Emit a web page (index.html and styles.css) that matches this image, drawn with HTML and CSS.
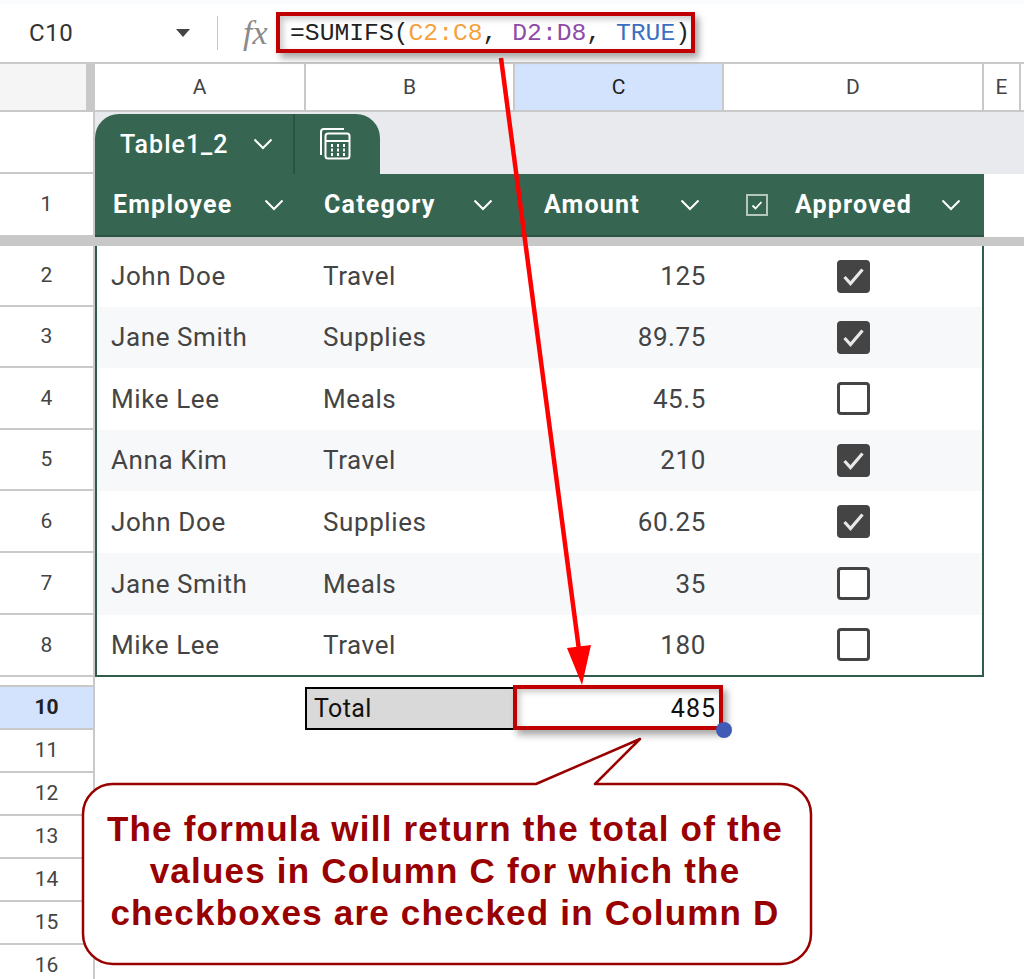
FILE: index.html
```html
<!DOCTYPE html>
<html lang="en">
<head>
<meta charset="utf-8">
<title>SUMIFS with checkboxes</title>
<link rel="stylesheet" href="styles.css">
</head>
<body>
<svg class="defs" width="0" height="0" aria-hidden="true">
  <symbol id="chev" viewBox="0 0 20 12"><polyline points="1.5,1.5 10,10 18.5,1.5" fill="none" stroke="#fff" stroke-width="2"/></symbol>
  <symbol id="tick" viewBox="0 0 33 33"><polyline points="7.5,17 13.5,23.5 25.5,9.5" fill="none" stroke="#e8e8e8" stroke-width="3.2"/></symbol>
</svg>
<div class="page">
  <header class="formula-bar">
    <div class="name-box">C10</div>
    <svg class="caret" width="14" height="8" viewBox="0 0 14 8"><polygon points="0,0 14,0 7,8" fill="#444"/></svg>
    <div class="bar-sep"></div>
    <div class="fx">fx</div>
    <div class="formula"><span class="f-base">=SUMIFS(</span><span class="f-orange">C2:C8</span><span class="f-base">, </span><span class="f-purple">D2:D8</span><span class="f-base">, </span><span class="f-blue">TRUE</span><span class="f-base">)</span></div>
  </header>
  <main class="sheet">
    <div class="corner"></div><div class="col">A</div><div class="col">B</div><div class="col col-on">C</div><div class="col">D</div><div class="col">E</div><div class="col-end"></div>

    <div class="rh rh-blank"></div>
    <div class="tab-row">
      <div class="tab">
        <div class="tab-name">Table1_2<svg class="chev" viewBox="0 0 20 12"><use href="#chev"/></svg></div>
        <div class="tab-calc">
          <svg width="36" height="36" viewBox="0 0 36 36" fill="none" stroke="#fff" stroke-width="2"><path d="M4 29V6a3 3 0 0 1 3-3h20"/><rect x="8.500" y="7.500" width="24" height="25" rx="2.500"/><path d="M9 15h23"/><path d="M14 19.500h2M20 19.500h2M26 19.500h2M14 24h2M20 24h2M26 24h2M14 28.500h2M20 28.500h2M26 28.500h2" stroke-width="3"/></svg>
        </div>
      </div>
    </div>

    <div class="rh">1</div>
    <div class="th"><span>Employee</span><svg class="chev" viewBox="0 0 20 12"><use href="#chev"/></svg></div>
    <div class="th"><span>Category</span><svg class="chev" viewBox="0 0 20 12"><use href="#chev"/></svg></div>
    <div class="th th-amount"><span>Amount</span><svg class="chev" viewBox="0 0 20 12"><use href="#chev"/></svg></div>
    <div class="th th-check">
      <svg class="type-ico" width="24" height="24" viewBox="0 0 24 24" fill="none"><rect x="2" y="2" width="20" height="20" stroke="#b4c6bd" stroke-width="2"/><polyline points="7.500,12.500 10.500,15.500 16.500,9" stroke="#fff" stroke-width="1.800"/></svg>
      <span>Approved</span><svg class="chev" viewBox="0 0 20 12"><use href="#chev"/></svg>
    </div>
    <div class="th-rest"></div>

    <div class="freeze"></div>

    <div class="rh">2</div><div class="td first">John Doe</div><div class="td">Travel</div><div class="td num">125</div><div class="td box last"><div class="cb on"><svg viewBox="0 0 33 33"><use href="#tick"/></svg></div></div><div class="rest"></div>
    <div class="rh">3</div><div class="td first alt">Jane Smith</div><div class="td alt">Supplies</div><div class="td num alt">89.75</div><div class="td box last alt"><div class="cb on"><svg viewBox="0 0 33 33"><use href="#tick"/></svg></div></div><div class="rest"></div>
    <div class="rh">4</div><div class="td first">Mike Lee</div><div class="td">Meals</div><div class="td num">45.5</div><div class="td box last"><div class="cb"></div></div><div class="rest"></div>
    <div class="rh">5</div><div class="td first alt">Anna Kim</div><div class="td alt">Travel</div><div class="td num alt">210</div><div class="td box last alt"><div class="cb on"><svg viewBox="0 0 33 33"><use href="#tick"/></svg></div></div><div class="rest"></div>
    <div class="rh">6</div><div class="td first">John Doe</div><div class="td">Supplies</div><div class="td num">60.25</div><div class="td box last"><div class="cb on"><svg viewBox="0 0 33 33"><use href="#tick"/></svg></div></div><div class="rest"></div>
    <div class="rh">7</div><div class="td first alt">Jane Smith</div><div class="td alt">Meals</div><div class="td num alt">35</div><div class="td box last alt"><div class="cb"></div></div><div class="rest"></div>
    <div class="rh">8</div><div class="td first bottom">Mike Lee</div><div class="td bottom">Travel</div><div class="td num bottom">180</div><div class="td box last bottom"><div class="cb"></div></div><div class="rest"></div>

    <div class="rh rh-blank"></div><div class="empty-row"></div>

    <div class="rh rh-on">10</div><div class="blank"></div><div class="total-label">Total</div><div class="total-value">485</div><div class="blank-wide"></div>
    <div class="rh">11</div><div class="empty-row"></div>
    <div class="rh">12</div><div class="empty-row"></div>
    <div class="rh">13</div><div class="empty-row"></div>
    <div class="rh">14</div><div class="empty-row"></div>
    <div class="rh">15</div><div class="empty-row"></div>
    <div class="rh">16</div><div class="empty-row"></div>
  </main>

  <svg class="annot" width="1024" height="979" viewBox="0 0 1024 979" aria-hidden="true">
    <path class="callout-shape" d="M113 784H536L640 739L595 784H781A30 30 0 0 1 811 814V934A30 30 0 0 1 781 964H113A30 30 0 0 1 83 934V814A30 30 0 0 1 113 784Z"/>
    <line class="arrow-line" x1="501" y1="58" x2="579" y2="650"/>
    <polygon class="arrow-head" points="567,648 591,645 582,685"/>
  </svg>
  <div class="red-box formula-box"></div>
  <div class="red-box total-box"></div>
  <div class="fill-handle"></div>
  <div class="callout-text">The formula will return the total of the<br>values in Column C for which the<br>checkboxes are checked in Column D</div>
</div>
</body>
</html>
```
FILE: styles.css
```css
* { box-sizing: border-box; }
html, body { margin: 0; padding: 0; background: #fff; }
body { font-family: Roboto, "Liberation Sans", sans-serif; color: #444; overflow: hidden; }
.defs { position: absolute; }
.page { position: relative; width: 1024px; height: 979px; overflow: hidden; padding-top: 4px; background: #f9fbfd; }

.formula-bar { height: 60px; display: flex; align-items: center; background: #fff; border-bottom: 2px solid #c9c9c9; }
.name-box { width: 176px; padding-left: 29px; font-size: 24px; letter-spacing: .6px; color: #333; }
.caret { margin-right: 27px; }
.bar-sep { width: 1px; height: 34px; background: #c7c7c7; margin-right: 25px; }
.fx { width: 29px; font-family: "Liberation Serif", serif; font-style: italic; font-size: 34px; color: #8a8a8a; line-height: 1; margin-right: 18px; }
.formula { font-family: "Liberation Mono", monospace; font-size: 24.7px; white-space: nowrap; }
.f-base { color: #222; }
.f-orange { color: #f5a13c; }
.f-purple { color: #8e4ba8; }
.f-blue { color: #3b6fc4; }

.sheet { display: grid; background: #fff; grid-template-columns: 95px 211px 209px 209px 260px 37px 3px;
  grid-template-rows: 48px 62px 63px 9px 61px 61px 62px 61px 62px 62px 62px 10px 43px 43px 43px 43px 43px 43px 43px; }

.corner { background: #f5f5f5; border-right: 9px solid #c8c8c8; border-bottom: 2px solid #c8c8c8; }
.col { display: flex; align-items: center; justify-content: center; font-size: 21px; border-right: 2px solid #c9c9c9; border-bottom: 2px solid #c9c9c9; }
.col-on { background: #d3e3fd; color: #222; }
.col-end { border-bottom: 2px solid #c9c9c9; }

.rh { display: flex; align-items: center; justify-content: center; font-size: 21px; border-right: 2px solid #c9c9c9; border-bottom: 2px solid #c9c9c9; padding-bottom: 1px; }
.rh-on { background: #d3e3fd; font-weight: 700; color: #222; }

.tab-row { grid-column: 2 / -1; background: #e8eaed; display: flex; align-items: flex-end; }
.tab { display: flex; height: 60px; background: #366552; border-radius: 24px 24px 0 0; color: #fff; }
.tab-name { width: 200px; display: flex; align-items: center; gap: 24px; padding-left: 25px; font-size: 25px; font-weight: 500; letter-spacing: 1px; border-right: 2px solid #2b5242; }
.tab-calc { width: 85px; display: flex; align-items: center; padding-left: 22px; }
.chev { width: 20px; height: 12px; flex: none; }

.th { display: flex; align-items: center; justify-content: space-between; background: #366552; color: #fff; font-size: 25px; font-weight: 700; letter-spacing: 1.2px; padding: 0 22px 0 18px; border-bottom: 2px solid #2b5242; }
.th-amount { padding-left: 29px; padding-right: 24px; }
.th-check { justify-content: flex-start; padding-left: 21px; padding-right: 23px; }
.type-ico { margin-right: 26px; flex: none; }
.th-check .chev { margin-left: auto; }
.th-rest { grid-column: 6 / -1; }

.freeze { grid-column: 1 / -1; background: #c8c8c8; }

.td { display: flex; align-items: center; padding: 0 17px 1px; font-size: 26px; letter-spacing: .6px; color: #444; }
.alt { background: #f6f8f9; }
.first { border-left: 2px solid #2f5d4a; padding-left: 14px; }
.last { border-right: 2px solid #2f5d4a; }
.bottom { border-bottom: 2px solid #2f5d4a; }
.num { justify-content: flex-end; padding-right: 18px; }
.box { justify-content: center; padding-left: 18px; padding-right: 17px; }
.rest { grid-column: 6 / -1; }
.cb { width: 33px; height: 33px; border: 3px solid #444; border-radius: 4px; background: #fff; }
.cb.on { background: #444; }
.cb svg { display: block; width: 33px; height: 33px; margin: -3px; }

.empty-row { grid-column: 2 / -1; }
.blank { min-width: 0; }
.blank-wide { grid-column: 5 / -1; }
.total-label { margin-left: -1px; background: #d9d9d9; border: 2px solid #000; border-right-width: 1px; display: flex; align-items: center; padding-left: 7px; font-size: 25px; letter-spacing: .4px; color: #111; }
.total-value { display: flex; align-items: center; justify-content: flex-end; padding-right: 8px; font-size: 25px; letter-spacing: 1px; color: #111; }

.annot { position: absolute; left: 0; top: 0; pointer-events: none; }
.callout-shape { fill: #fff; stroke: #990000; stroke-width: 2.5; stroke-linejoin: round; }
.arrow-line { stroke: #f00; stroke-width: 4.5; }
.arrow-head { fill: #f00; }

.red-box { position: absolute; border: 4px solid #c00000; box-shadow: 4px 5px 7px rgba(0,0,0,.35), inset 3px 3px 6px rgba(0,0,0,.22); pointer-events: none; }
.formula-box { left: 276px; top: 12px; width: 419px; height: 41px; }
.total-box { left: 513px; top: 685px; width: 210px; height: 45px; }
.fill-handle { position: absolute; left: 716px; top: 722px; width: 16px; height: 16px; border-radius: 50%; background: #3f5bb5; }

.callout-text { position: absolute; left: 81px; top: 808px; width: 728px; text-align: center; font-family: "Liberation Sans", sans-serif; font-weight: 700; font-size: 35px; line-height: 42px; color: #990000; letter-spacing: 1.2px; white-space: nowrap; }
```
